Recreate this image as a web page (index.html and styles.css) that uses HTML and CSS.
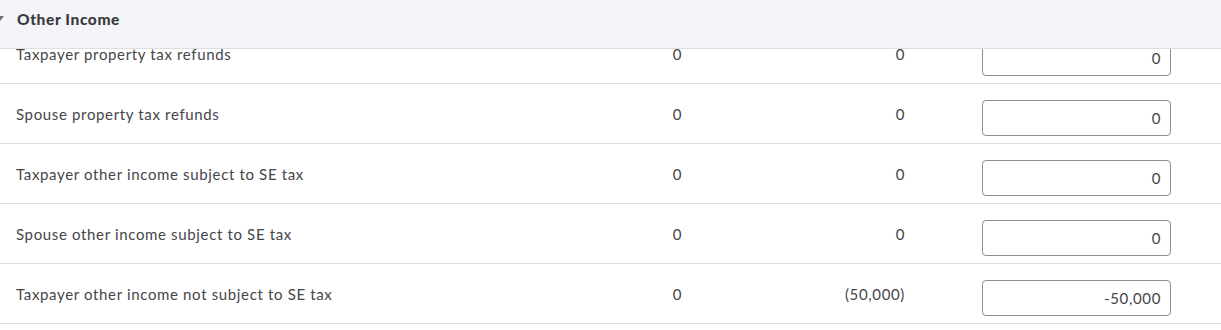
FILE: index.html
```html
<!DOCTYPE html>
<html lang="en">

<head>
    <meta charset="UTF-8">
    <meta name="viewport" content="width=device-width, initial-scale=1.0">
    <title>Other Income</title>
    <link rel="stylesheet" href="styles.css">
</head>

<body>
    <div class="section">
        <div class="section-header">
            <svg class="caret" width="8" height="6" viewBox="0 0 8 6">
                <path d="M0 0 L8 0 L4 5 Z" fill="#6b6c72"></path>
            </svg>
            <span class="section-title">Other Income</span>
        </div>
        <div class="rows-viewport">
            <div class="rows">
                <div class="row">
                    <div class="label">Taxpayer property tax refunds</div>
                    <div class="num col-a">0</div>
                    <div class="num col-b">0</div>
                    <div class="entry"><input type="text" value="0"></div>
                </div>
                <div class="row">
                    <div class="label">Spouse property tax refunds</div>
                    <div class="num col-a">0</div>
                    <div class="num col-b">0</div>
                    <div class="entry"><input type="text" value="0"></div>
                </div>
                <div class="row">
                    <div class="label">Taxpayer other income subject to SE tax</div>
                    <div class="num col-a">0</div>
                    <div class="num col-b">0</div>
                    <div class="entry"><input type="text" value="0"></div>
                </div>
                <div class="row">
                    <div class="label">Spouse other income subject to SE tax</div>
                    <div class="num col-a">0</div>
                    <div class="num col-b">0</div>
                    <div class="entry"><input type="text" value="0"></div>
                </div>
                <div class="row">
                    <div class="label">Taxpayer other income not subject to SE tax</div>
                    <div class="num col-a">0</div>
                    <div class="num col-b">(50,000)</div>
                    <div class="entry"><input type="text" value="-50,000"></div>
                </div>
            </div>
        </div>
    </div>
</body>

</html>
```

FILE: styles.css
```css
body {
    margin: 0;
    font-family: Lato, "Open Sans", Arial, sans-serif;
    color: #393a3d;
    background-color: #ffffff;
}

.section-header {
    display: flex;
    align-items: center;
    height: 38px;
    padding-bottom: 10px;
    background-color: #f4f5f8;
    border-bottom: 1px solid #dcdee2;
}

.caret {
    flex-shrink: 0;
    margin-left: -4px;
    margin-right: 13px;
}

.section-title {
    font-size: 15.5px;
    font-weight: 900;
    letter-spacing: 0.6px;
    color: #393a3d;
}

.rows-viewport {
    height: 281px;
    overflow: hidden;
}

.rows {
    margin-top: -25px;
}

.row {
    display: flex;
    align-items: center;
    height: 59px;
    border-bottom: 1px solid #dcdee2;
    font-size: 15px;
    letter-spacing: 0.65px;
    color: #45464a;
}

.label {
    width: 520px;
    padding-left: 16px;
}

.num {
    text-align: right;
}

.col-a {
    width: 146px;
}

.col-b {
    width: 223px;
}

.entry {
    margin-left: 77px;
    padding-top: 8px;
}

.entry input {
    box-sizing: border-box;
    width: 189px;
    height: 36px;
    padding: 0 9px;
    border: 1px solid #8d9096;
    border-radius: 4px;
    font-family: inherit;
    font-size: 15px;
    letter-spacing: 0.65px;
    color: #45464a;
    text-align: right;
}
```
